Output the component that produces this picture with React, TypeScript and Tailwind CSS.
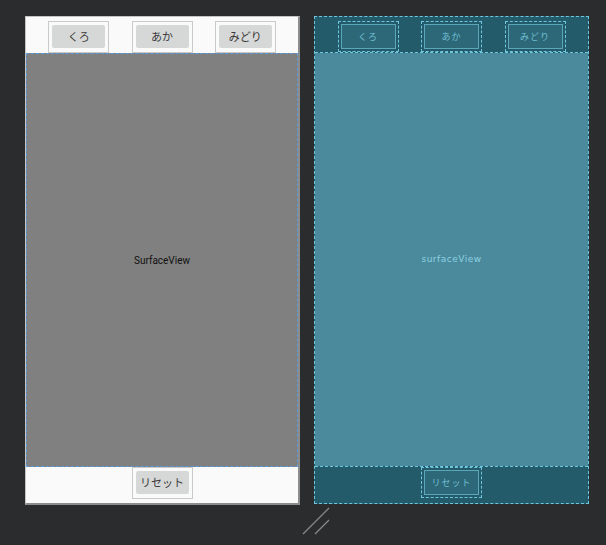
import React from "react";

const jp = { fontFamily: '"Noto Sans CJK JP", "Noto Sans", sans-serif' };

function DesignButton({ label }: { label: string }) {
    return (
        <div className="w-[61px] h-[32px] border border-[#c9c9c9] p-[3px] pb-[4px]">
            <div className="h-full w-full rounded-[2px] bg-[#d6d7d7] flex items-center justify-center text-[11px] text-[#3a3a3a]">
                {label}
            </div>
        </div>
    );
}

function BlueprintButton({ label }: { label: string }) {
    return (
        <div className="w-[61px] h-[31px] border border-dashed border-[#6fc6dc] p-[2px]">
            <div className="h-full w-full border border-[#5ba6b9] bg-[#2d6879] flex items-center justify-center text-[9px] text-[#72bfd2] tracking-[1px]">
                {label}
            </div>
        </div>
    );
}

function DesignView() {
    return (
        <div className="w-[275px] h-[489px] flex flex-col border-l border-t border-[#c4c4c4] border-r-2 border-b-2 border-r-[#8c8c8c] border-b-[#8c8c8c] bg-[#fafafa]">
            <div className="h-[36px] flex justify-evenly items-end">
                <DesignButton label="くろ" />
                <DesignButton label="あか" />
                <DesignButton label="みどり" />
            </div>
            <div className="h-[414px] bg-[#808080] border border-dashed border-[#5b9ad6] flex items-center justify-center">
                <span className="text-[10px] text-[#111]" style={{ fontFamily: "Roboto, sans-serif" }}>
                    SurfaceView
                </span>
            </div>
            <div className="flex-1 flex justify-center items-start">
                <DesignButton label="リセット" />
            </div>
        </div>
    );
}

function BlueprintView() {
    return (
        <div className="w-[275px] h-[488px] flex flex-col border border-dashed border-[#6fc6dc] bg-[#235b6b]">
            <div className="h-[36px] flex justify-evenly items-end border-b border-dashed border-[#6fc6dc]">
                <BlueprintButton label="くろ" />
                <BlueprintButton label="あか" />
                <BlueprintButton label="みどり" />
            </div>
            <div className="h-[413px] bg-[#4a8a9c] flex items-center justify-center">
                <span className="text-[9px] text-[#8fd0e0] tracking-[0.5px]" style={{ fontFamily: '"DejaVu Sans", sans-serif' }}>
                    surfaceView
                </span>
            </div>
            <div className="flex-1 flex justify-center items-start border-t border-dashed border-[#6fc6dc]">
                <BlueprintButton label="リセット" />
            </div>
        </div>
    );
}

export default function App() {
    return (
        <div className="relative w-[606px] h-[545px] bg-[#2b2c2e] overflow-hidden" style={jp}>
            <div className="flex gap-[14px] pl-[25px] pt-[16px]">
                <DesignView />
                <BlueprintView />
            </div>
            <svg className="absolute left-[300px] top-[506px]" width="34" height="32" viewBox="0 0 34 32">
                <line x1="3" y1="28" x2="29" y2="2" stroke="#8a8a8a" strokeWidth="1.2" />
                <line x1="15" y1="28" x2="29" y2="14" stroke="#8a8a8a" strokeWidth="1.2" />
            </svg>
        </div>
    );
}
